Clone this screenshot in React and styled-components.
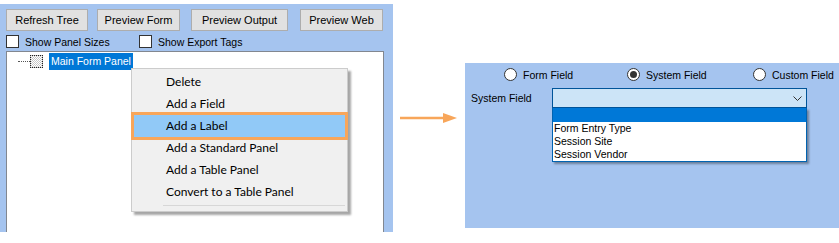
import React from "react";
import styled, { createGlobalStyle } from "styled-components";

const Global = createGlobalStyle`
  html, body { margin: 0; padding: 0; background: #fff; }
  body { font-family: "Liberation Sans", Arial, sans-serif; }
`;

const Page = styled.div`
  width: 839px;
  height: 243px;
  background: #fff;
  display: flex;
  align-items: flex-start;
  overflow: hidden;
`;

const LeftPane = styled.div`
  position: relative;
  margin-top: 4px;
  width: 393px;
  height: 228px;
  background: #a5c4ef;
  box-sizing: border-box;
  padding: 5px 9px 0 6px;
  display: flex;
  flex-direction: column;
`;

const ButtonRow = styled.div`
  display: flex;
  height: 22px;
`;

const Button = styled.div`
  width: ${(p) => p.$w}px;
  margin-left: ${(p) => p.$ml || 0}px;
  height: 22px;
  box-sizing: border-box;
  background: #e1e1e1;
  border: 1px solid #adadad;
  display: flex;
  align-items: center;
  justify-content: center;
  font-size: 11px;
  color: #000;
  white-space: nowrap;
`;

const CheckRow = styled.div`
  display: flex;
  align-items: center;
  margin-top: 4px;
  height: 13px;
  font-size: 10.5px;
  color: #000;
  white-space: nowrap;
`;

const CheckOption = styled.div`
  display: flex;
  align-items: center;
  width: ${(p) => p.$w}px;
  flex: none;
`;

const Check = styled.span`
  width: 13px;
  height: 13px;
  box-sizing: border-box;
  border: 1px solid #333;
  background: #fff;
  margin-right: 6px;
  flex: none;
`;

const Tree = styled.div`
  margin-top: 3px;
  flex: 1;
  background: #fff;
  border: 1px solid #828790;
  border-bottom: none;
  box-sizing: border-box;
  padding: 1px 0 0 11px;
`;

const TreeItem = styled.div`
  display: flex;
  align-items: center;
  height: 17px;
`;

const Dots = styled.span`
  width: 12px;
  border-top: 1px dotted #555;
  flex: none;
`;

const NodeIcon = styled.span`
  width: 13px;
  height: 13px;
  box-sizing: border-box;
  border: 1px dotted #222;
  background: repeating-conic-gradient(#c8c8c8 0 25%, #fff 0 50%) 0 0 / 2px 2px;
  flex: none;
`;

const NodeLabel = styled.span`
  margin-left: 6px;
  background: #0078d7;
  color: #fff;
  font-family: "Liberation Sans", Arial, sans-serif;
  font-size: 10.5px;
  height: 17px;
  line-height: 17px;
  padding: 0 2px;
  white-space: nowrap;
`;

const Menu = styled.div`
  position: absolute;
  left: 131px;
  top: 64px;
  width: 217px;
  box-sizing: border-box;
  background: #f0f0f0;
  border: 1px solid #cccccc;
  padding: 2px 2px 5px 2px;
  box-shadow: 3px 3px 2px rgba(0, 0, 0, 0.35);
  font-family: Lato, "Noto Sans", sans-serif;
  font-size: 12px;
  color: #000;
`;

const MenuItem = styled.div`
  height: 22px;
  line-height: 22px;
  padding-left: 32px;
  background: ${(p) => (p.$active ? "#91c9f7" : "transparent")};
  outline: ${(p) => (p.$active ? "3px solid #f8a65a" : "none")};
  position: relative;
`;

const Separator = styled.div`
  margin: 2px 0 0 29px;
  height: 1px;
  background: #d7d7d7;
`;

const ArrowBox = styled.div`
  width: 72px;
  height: 243px;
  display: flex;
  align-items: flex-start;
  justify-content: center;
  padding-top: 112px;
  box-sizing: border-box;
`;

const RightPane = styled.div`
  position: relative;
  margin-top: 63px;
  width: 374px;
  height: 165px;
  background: #a5c4ef;
  box-sizing: border-box;
  padding: 5px 0 0 6px;
  font-size: 10.5px;
  color: #000;
  white-space: nowrap;
`;

const RadioRow = styled.div`
  display: flex;
  align-items: center;
  height: 13px;
  padding-left: 33px;
`;

const RadioOption = styled.div`
  display: flex;
  align-items: center;
  width: ${(p) => p.$w}px;
  flex: none;
`;

const Radio = styled.span`
  width: 13px;
  height: 13px;
  box-sizing: border-box;
  border-radius: 50%;
  border: 1px solid #333;
  background: #fff;
  margin-right: 6px;
  display: flex;
  align-items: center;
  justify-content: center;
  flex: none;
  &::after {
    content: "";
    width: 7px;
    height: 7px;
    border-radius: 50%;
    background: ${(p) => (p.$on ? "#333" : "transparent")};
  }
`;

const FieldRow = styled.div`
  display: flex;
  align-items: center;
  margin-top: 7px;
  height: 20px;
`;

const FieldLabel = styled.span`
  width: 81px;
`;

const Combo = styled.div`
  width: 255px;
  height: 20px;
  box-sizing: border-box;
  background: #cce4f7;
  border: 1px solid #005499;
  display: flex;
  align-items: center;
  justify-content: flex-end;
  padding-right: 4px;
`;

const DropList = styled.div`
  position: absolute;
  left: 87px;
  top: 45px;
  width: 255px;
  box-sizing: border-box;
  background: #fff;
  border: 1px solid #0063b1;
  border-top: none;
  box-shadow: 2px 2px 2px rgba(0, 0, 0, 0.35);
`;

const DropItem = styled.div`
  height: ${(p) => (p.$sel ? 14 : 13)}px;
  line-height: 13px;
  padding-left: 1px;
  background: ${(p) => (p.$sel ? "#0078d7" : "#fff")};
  color: ${(p) => (p.$sel ? "#fff" : "#000")};
`;

const menuItems = [
  "Delete",
  "Add a Field",
  "Add a Label",
  "Add a Standard Panel",
  "Add a Table Panel",
  "Convert to a Table Panel",
];

export default function App() {
  return (
    <>
      <Global />
      <Page>
        <LeftPane>
          <ButtonRow>
            <Button $w={82}>Refresh Tree</Button>
            <Button $w={83} $ml={9}>Preview Form</Button>
            <Button $w={97} $ml={11}>Preview Output</Button>
            <Button $w={83} $ml={12}>Preview Web</Button>
          </ButtonRow>
          <CheckRow>
            <CheckOption $w={133}>
              <Check />
              Show Panel Sizes
            </CheckOption>
            <CheckOption $w={140}>
              <Check />
              Show Export Tags
            </CheckOption>
          </CheckRow>
          <Tree>
            <TreeItem>
              <Dots />
              <NodeIcon />
              <NodeLabel>Main Form Panel</NodeLabel>
            </TreeItem>
          </Tree>
          <Menu>
            {menuItems.map((m) => (
              <MenuItem key={m} $active={m === "Add a Label"}>
                {m}
              </MenuItem>
            ))}
            <Separator />
          </Menu>
        </LeftPane>
        <ArrowBox>
          <svg width="58" height="12" viewBox="0 0 58 12">
            <line x1="0" y1="6" x2="46" y2="6" stroke="#f8a65a" strokeWidth="2.5" />
            <polygon points="43,1 57,6 43,11" fill="#f8a65a" />
          </svg>
        </ArrowBox>
        <RightPane>
          <RadioRow>
            <RadioOption $w={123}>
              <Radio />
              Form Field
            </RadioOption>
            <RadioOption $w={126}>
              <Radio $on />
              System Field
            </RadioOption>
            <RadioOption $w={85}>
              <Radio />
              Custom Field
            </RadioOption>
          </RadioRow>
          <FieldRow>
            <FieldLabel>System Field</FieldLabel>
            <Combo>
              <svg width="9" height="5" viewBox="0 0 9 5">
                <polyline points="0.5,0.5 4.5,4.5 8.5,0.5" fill="none" stroke="#333" strokeWidth="1" />
              </svg>
            </Combo>
          </FieldRow>
          <DropList>
            <DropItem $sel>&nbsp;</DropItem>
            <DropItem>Form Entry Type</DropItem>
            <DropItem>Session Site</DropItem>
            <DropItem>Session Vendor</DropItem>
          </DropList>
        </RightPane>
      </Page>
    </>
  );
}
